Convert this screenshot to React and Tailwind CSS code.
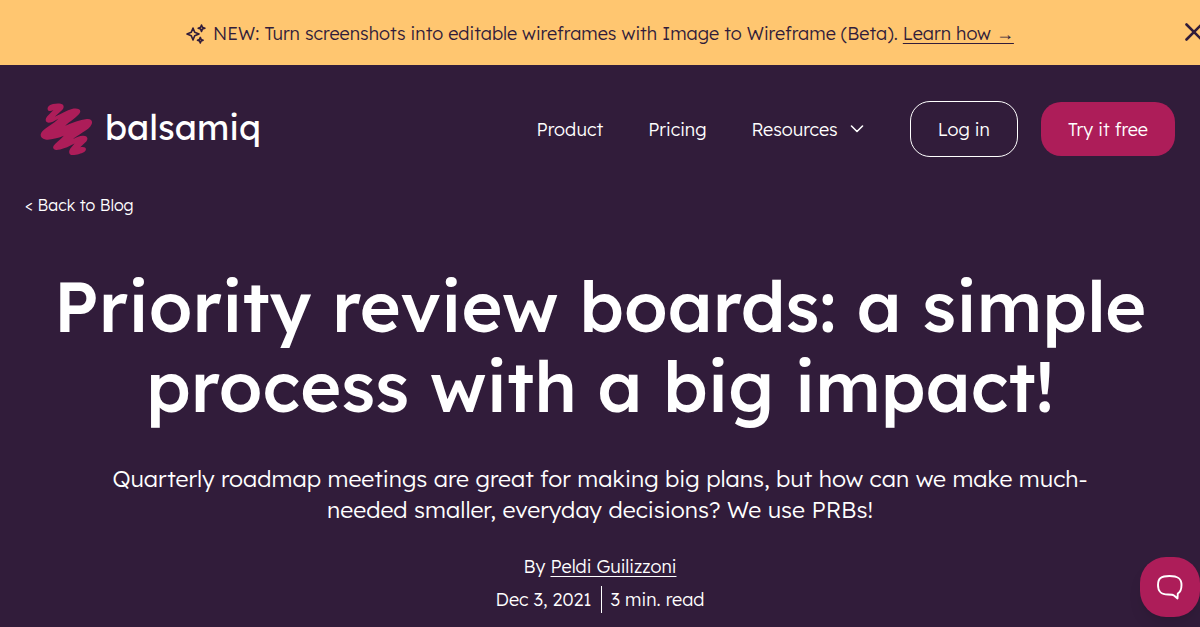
import React from "react";

function Sparkles() {
  return (
    <svg viewBox="0 0 20 20" className="h-5 w-5 shrink-0" fill="none" stroke="#311c3a" strokeWidth="1.6" strokeLinejoin="round" aria-hidden="true">
      <path d="M7 4 L8.7 8.3 L13 10 L8.7 11.7 L7 16 L5.3 11.7 L1 10 L5.3 8.3 Z" />
      <path d="M15.5 1 L16.4 3.3 L18.9 4.2 L16.4 5.1 L15.5 7.4 L14.6 5.1 L12.2 4.2 L14.6 3.3 Z" />
      <path d="M14.3 13.4 L15.1 15.4 L17.1 16.2 L15.1 17 L14.3 19 L13.5 17 L11.5 16.2 L13.5 15.4 Z" />
    </svg>
  );
}

function Scribble() {
  return (
    <svg viewBox="11 16 158 158" className="size-[53px]" fill="#ad1d59" aria-hidden="true">
      <path d="M38 24 C46 18 62 16 73 18 C83 20 84 29 77 37 L55 57 C74 48 92 38 106 34 C122 30 135 35 130 45 C124 56 98 72 86 84 C108 76 130 66 150 64 C168 62 170 75 161 86 C150 100 124 110 109 124 C120 118 130 114 138 114 C152 113 156 122 149 131 L131 148 C140 146 148 147 148 154 C147 162 138 165 128 168 C119 171 110 172 104 171 C95 168 97 156 104 149 L114 137 C94 148 74 156 60 156 C47 154 48 146 56 138 C64 130 74 124 82 114 C60 123 40 127 27 125 C12 122 9 110 18 100 C30 88 52 78 66 63 C54 70 44 75 36 75 C26 73 26 63 32 56 L51 37 C46 40 40 41 36 39 C32 35 33 28 38 24 Z" />
    </svg>
  );
}

export default function App() {
  return (
    <div className="min-h-screen bg-[#311c3a] font-['Lexend','Liberation_Sans',sans-serif] text-lg leading-[27px] font-light text-white">
      <aside className="relative flex min-h-[65px] items-center justify-center bg-[#ffc670] text-[#311c3a]">
        <p className="flex items-center gap-[7px] pt-0.5">
          <Sparkles />
          <span>
            NEW: Turn screenshots into editable wireframes with Image to Wireframe (Beta).{" "}
            <a href="#learn" className="underline underline-offset-3">Learn how →</a>
          </span>
        </p>
        <div className="absolute top-0 right-0 flex h-16 w-4 items-center overflow-hidden">
          <button type="button" aria-label="Close announcement" className="shrink-0">
            <svg viewBox="0 0 20 20" className="size-5" fill="none" stroke="#311c3a" strokeWidth="2.6" strokeLinecap="round" aria-hidden="true">
              <path d="M2.5 2.5 L17.5 17.5 M17.5 2.5 L2.5 17.5" />
            </svg>
          </button>
        </div>
      </aside>

      <header className="flex items-center justify-between px-[25px] pt-9">
        <a href="#home" className="ml-[15px] flex items-center gap-3">
          <Scribble />
          <span className="pb-1 text-[35px] leading-12 font-normal">balsamiq</span>
        </a>
        <nav className="flex items-center">
          <div className="mr-[46px] flex items-center gap-[45px]">
            <a href="#product">Product</a>
            <a href="#pricing">Pricing</a>
            <button type="button" className="flex items-center gap-3">
              Resources
              <svg viewBox="0 0 14 8" className="h-2 w-3.5" fill="none" stroke="currentColor" strokeWidth="1.6" strokeLinecap="round" strokeLinejoin="round" aria-hidden="true">
                <path d="M1.5 1 L7 6.500 L12.5 1" />
              </svg>
            </button>
          </div>
          <a href="#login" className="mr-[23px] rounded-[20px] border border-white px-[27px] pt-3.5 pb-[13px]">Log in</a>
          <a href="#try" className="rounded-[20px] bg-[#ad1d59] px-[27px] pt-3.5 pb-[13px]">Try it free</a>
        </nav>
      </header>

      <main className="px-[25px] pt-9 text-center">
        <div className="text-left text-base">
          <a href="#blog">&lt; Back to Blog</a>
        </div>
        <h1 className="mt-[49px] text-[70px] leading-20 font-medium">
          Priority review boards: a simple process with a big impact!
        </h1>
        <p className="mx-auto mt-[37px] max-w-[990px] text-[23px] leading-[31px]">
          Quarterly roadmap meetings are great for making big plans, but how can we make much-needed smaller, everyday decisions? We use PRBs!
        </p>
        <p className="mt-7">
          By <a href="#author" className="underline underline-offset-3">Peldi Guilizzoni</a>
        </p>
        <div className="mt-1.5 flex justify-center">
          <span className="border-r border-white pr-[9px]">Dec 3, 2021</span>
          <span className="pl-[9px]">3 min. read</span>
        </div>
      </main>

      <button type="button" aria-label="Open chat" className="fixed right-0 bottom-2.5 flex size-15 items-center justify-center rounded-[26px] bg-[#ad1d59] shadow-lg">
        <svg viewBox="0 0 28 28" className="size-7" fill="none" stroke="white" strokeWidth="1.9" strokeLinejoin="round" aria-hidden="true">
          <path d="M13.500 3 C5 3 2 5.500 2 12 C2 18.500 4.500 21.500 12 21.500 C15 21.500 17 21.500 18 22.500 L21.500 25.500 L21.800 20.500 C24.800 18.800 25.500 16.500 25.500 12 C25.500 5.500 22 3 13.500 3 Z" />
        </svg>
      </button>
    </div>
  );
}
